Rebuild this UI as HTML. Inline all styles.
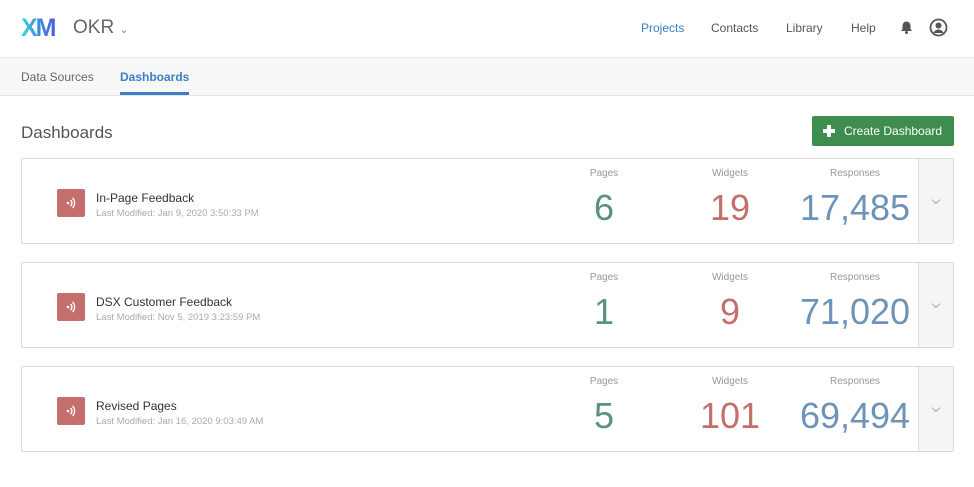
<!DOCTYPE html>
<html><head><style>
*{margin:0;padding:0;box-sizing:border-box}
body{width:974px;height:487px;background:#fff;font-family:"Liberation Sans",sans-serif;position:relative;overflow:hidden;color:#333}
.a{position:absolute;white-space:nowrap}
.hdr{top:0;left:0;width:974px;height:58px;border-bottom:1px solid #e8e8e8}
.tabs{top:58px;left:0;width:974px;height:38px;background:#f7f7f7;border-bottom:1px solid #e4e4e4}
.card{position:absolute;left:21px;width:933px;height:86px;border:1px solid #d9d9d9;border-radius:2px;background:#fff}
.card .side{position:absolute;right:0;top:0;width:35px;height:84px;background:#f5f5f5;border-left:1px solid #e0e0e0}
.card .side:after{content:"";position:absolute;left:14px;top:38px;width:5px;height:5px;border-right:1px solid #aaa;border-bottom:1px solid #aaa;transform:rotate(45deg)}
.ico{position:absolute;left:35px;top:30px;width:28px;height:28px;background:#c46e6e;border-radius:2px}
.t{position:absolute;left:74px;top:32px;font-size:12px;color:#333}
.s{position:absolute;left:74px;top:49px;font-size:9.5px;color:#aaa}
.col{position:absolute;top:0;text-align:center}
.col .l{font-size:10px;color:#999;margin-top:9px}
.col .n{font-size:36px;margin-top:9px;line-height:40px}
</style></head><body>
<div class="a hdr"></div>
<div class="a" style="left:21px;top:14px;font-size:25px;font-weight:bold;letter-spacing:-2px;background:linear-gradient(90deg,#3cd8d0,#3a8be0 55%,#4a5ee0);-webkit-background-clip:text;background-clip:text;color:transparent">XM</div>
<div class="a" style="left:73px;top:17px;font-size:19px;color:#666">OKR <span style="font-size:11px;color:#888">&#8964;</span></div>
<div class="a" style="left:641px;top:21px;font-size:12px;color:#3b7fc4">Projects</div>
<div class="a" style="left:711px;top:21px;font-size:12px;color:#555">Contacts</div>
<div class="a" style="left:786px;top:21px;font-size:12px;color:#555">Library</div>
<div class="a" style="left:851px;top:21px;font-size:12px;color:#555">Help</div>
<svg class="a" style="left:899px;top:20px" width="15" height="15" viewBox="0 0 15 15"><path d="M7.5 1.5c-2.5 0-4 2-4 4.5v3L2 11h11l-1.5-2V6c0-2.5-1.5-4.5-4-4.5z" fill="#555"/><circle cx="7.5" cy="12.5" r="1.5" fill="#555"/></svg>
<svg class="a" style="left:929px;top:18px" width="19" height="19" viewBox="0 0 19 19"><circle cx="9.5" cy="9.5" r="8" fill="none" stroke="#555" stroke-width="1.8"/><circle cx="9.5" cy="7.5" r="3" fill="#555"/><path d="M4.5 15c1-2.5 3-3.5 5-3.5s4 1 5 3.5" fill="#555"/></svg>
<div class="a tabs"></div>
<div class="a" style="left:21px;top:70px;font-size:12px;color:#666">Data Sources</div>
<div class="a" style="left:120px;top:70px;font-size:12px;color:#3b7fc4;font-weight:bold">Dashboards</div>
<div class="a" style="left:120px;top:92px;width:69px;height:3px;background:#3b7fc4"></div>
<div class="a" style="left:21px;top:123px;font-size:17px;color:#555">Dashboards</div>
<div class="a" style="left:812px;top:116px;width:142px;height:30px;background:#3f8d4e;border-radius:2px;color:#fff;font-size:12px;line-height:30px;padding-left:32px">Create Dashboard</div>
<div class="a" style="left:823px;top:124px;width:12px;height:14px"><div style="position:absolute;left:4px;top:1px;width:3.5px;height:12px;background:#fff"></div><div style="position:absolute;left:0;top:5px;width:12px;height:3.5px;background:#fff"></div></div>

<div class="card" style="top:158px"><div class="ico"><svg width="28" height="28"><circle cx="11" cy="14" r="1.3" fill="#fff"/><path d="M13.5 11a4 4 0 0 1 0 6M15.5 9a7 7 0 0 1 0 10" stroke="#fff" stroke-width="1.4" fill="none"/></svg></div><div class="t">In-Page Feedback</div><div class="s">Last Modified: Jan 9, 2020 3:50:33 PM</div>
<div class="col" style="left:542px;width:80px"><div class="l">Pages</div><div class="n" style="color:#5b9185">6</div></div>
<div class="col" style="left:668px;width:80px"><div class="l">Widgets</div><div class="n" style="color:#c46e6e">19</div></div>
<div class="col" style="left:773px;width:120px"><div class="l">Responses</div><div class="n" style="color:#6d94b8">17,485</div></div><div class="side"></div></div>

<div class="card" style="top:262px"><div class="ico"><svg width="28" height="28"><circle cx="11" cy="14" r="1.3" fill="#fff"/><path d="M13.5 11a4 4 0 0 1 0 6M15.5 9a7 7 0 0 1 0 10" stroke="#fff" stroke-width="1.4" fill="none"/></svg></div><div class="t">DSX Customer Feedback</div><div class="s">Last Modified: Nov 5, 2019 3:23:59 PM</div>
<div class="col" style="left:542px;width:80px"><div class="l">Pages</div><div class="n" style="color:#5b9185">1</div></div>
<div class="col" style="left:668px;width:80px"><div class="l">Widgets</div><div class="n" style="color:#c46e6e">9</div></div>
<div class="col" style="left:773px;width:120px"><div class="l">Responses</div><div class="n" style="color:#6d94b8">71,020</div></div><div class="side"></div></div>

<div class="card" style="top:366px"><div class="ico"><svg width="28" height="28"><circle cx="11" cy="14" r="1.3" fill="#fff"/><path d="M13.5 11a4 4 0 0 1 0 6M15.5 9a7 7 0 0 1 0 10" stroke="#fff" stroke-width="1.4" fill="none"/></svg></div><div class="t">Revised Pages</div><div class="s">Last Modified: Jan 16, 2020 9:03:49 AM</div>
<div class="col" style="left:542px;width:80px"><div class="l">Pages</div><div class="n" style="color:#5b9185">5</div></div>
<div class="col" style="left:668px;width:80px"><div class="l">Widgets</div><div class="n" style="color:#c46e6e">101</div></div>
<div class="col" style="left:773px;width:120px"><div class="l">Responses</div><div class="n" style="color:#6d94b8">69,494</div></div><div class="side"></div></div>
</body></html>
